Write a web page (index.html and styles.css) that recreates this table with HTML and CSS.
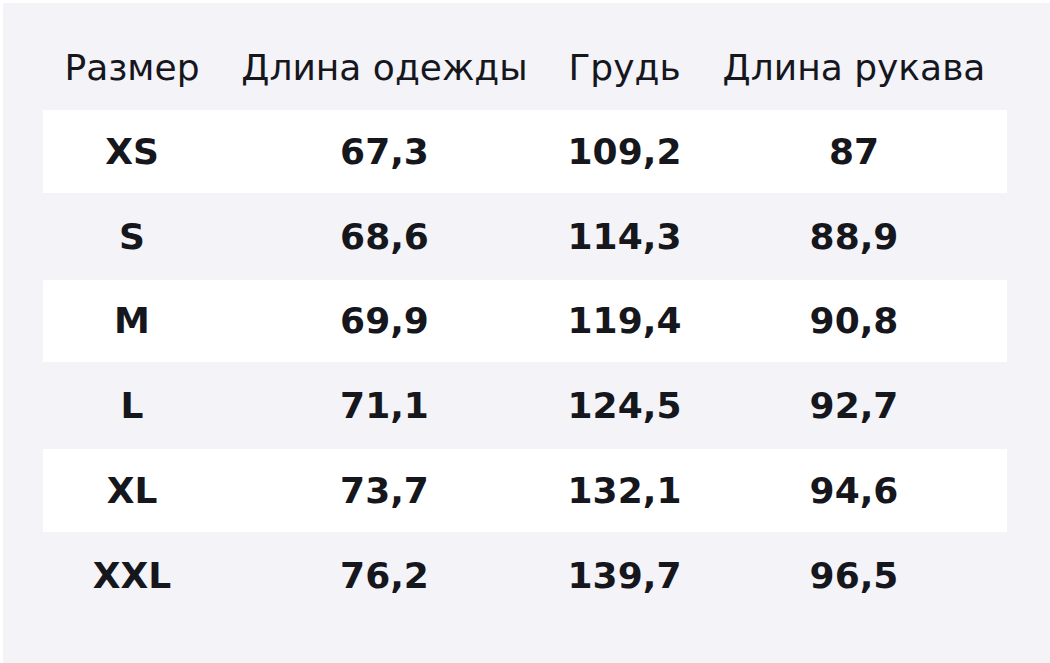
FILE: index.html
```html
<!DOCTYPE html>
<html lang="ru">
<head>
<meta charset="utf-8">
<title>Размеры</title>
<link rel="stylesheet" href="styles.css">
</head>
<body>
<div class="panel">
  <table class="sizes">
    <colgroup>
      <col class="c1"><col class="c2"><col class="c3"><col class="c4">
    </colgroup>
    <thead>
      <tr class="head">
        <th>Размер</th><th>Длина одежды</th><th>Грудь</th><th>Длина рукава</th>
      </tr>
    </thead>
    <tbody>
      <tr class="light"><td>XS</td><td>67,3</td><td>109,2</td><td>87</td></tr>
      <tr><td>S</td><td>68,6</td><td>114,3</td><td>88,9</td></tr>
      <tr class="light"><td>M</td><td>69,9</td><td>119,4</td><td>90,8</td></tr>
      <tr><td>L</td><td>71,1</td><td>124,5</td><td>92,7</td></tr>
      <tr class="light"><td>XL</td><td>73,7</td><td>132,1</td><td>94,6</td></tr>
      <tr><td>XXL</td><td>76,2</td><td>139,7</td><td>96,5</td></tr>
    </tbody>
  </table>
</div>
</body>
</html>
```
FILE: styles.css
```css
html, body {
  margin: 0;
  padding: 0;
  background: #ffffff;
  overflow: hidden;
}

.panel {
  margin: 3px 0 0 3px;
  height: 660px;
  background: #f3f3f8;
  padding: 22px 0 0 40px;
  box-sizing: border-box;
  font-family: "DejaVu Sans", "Liberation Sans", sans-serif;
  color: #16161d;
}

.sizes {
  width: 964px;
  border-collapse: separate;
  border-spacing: 0;
  table-layout: fixed;
}

.c1 { width: 178px; }
.c2 { width: 327px; }
.c3 { width: 153px; }
.c4 { width: 306px; }

.head th {
  height: 85px;
  padding: 0;
  font-size: 36px;
  font-weight: normal;
  text-align: center;
  vertical-align: middle;
  white-space: nowrap;
}

.sizes td {
  height: 82.75px;
  padding: 0;
  border-bottom: 2px solid #f3f3f8;
  font-size: 36px;
  font-weight: bold;
  text-align: center;
  vertical-align: middle;
}

.sizes tr.light {
  background: #ffffff;
}
```
